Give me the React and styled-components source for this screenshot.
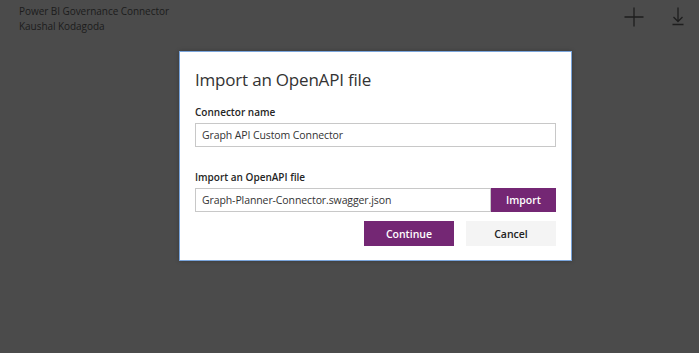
import React from "react";
import styled, { createGlobalStyle } from "styled-components";

const GlobalStyle = createGlobalStyle`
    html, body {
        margin: 0;
        padding: 0;
        background: #4b4b4b;
        font-family: "Open Sans", "Noto Sans", sans-serif;
    }
`;

const Page = styled.div`
    width: 699px;
    height: 353px;
    overflow: hidden;
    background: #4b4b4b;
`;

const TopBar = styled.div`
    display: flex;
    justify-content: space-between;
    align-items: flex-start;
    height: 51px;
    box-sizing: border-box;
    padding: 4px 11px 0 19px;
`;

const AppInfo = styled.div`
    display: flex;
    flex-direction: column;
    font-size: 10px;
    line-height: 14.5px;
    letter-spacing: -0.05px;
    color: #1c1c1c;
`;

const Actions = styled.div`
    display: flex;
    gap: 24px;
    padding-top: 3px;
`;

const IconButton = styled.div`
    width: 20px;
    height: 20px;
    display: flex;
    align-items: center;
    justify-content: center;
    color: #1e1e1e;
`;

const Dialog = styled.div`
    margin-left: 179px;
    width: 393px;
    box-sizing: border-box;
    background: #ffffff;
    border: 1px solid #7aa5dc;
    box-shadow: 0 0 4px rgba(0, 0, 0, 0.25);
    padding: 16px 15px 14px 15px;
`;

const Title = styled.h1`
    margin: 0 0 14px 0;
    font-size: 17px;
    font-weight: 400;
    line-height: 24px;
    color: #333333;
    letter-spacing: -0.2px;
`;

const Label = styled.label`
    display: block;
    font-size: 10px;
    font-weight: 600;
    line-height: 13px;
    color: #252525;
    margin-bottom: 4px;
`;

const Field = styled.div`
    margin-bottom: ${(p) => p.$gap || 0}px;
`;

const Input = styled.div`
    flex: 1;
    height: 24px;
    box-sizing: border-box;
    border: 1px solid #c8c8c8;
    padding: 0 6px;
    display: flex;
    align-items: center;
    font-size: 10.5px;
    letter-spacing: -0.1px;
    color: #333333;
    background: #fff;
`;

const InputRow = styled.div`
    display: flex;
`;

const Button = styled.button`
    height: ${(p) => p.$h || 24}px;
    width: ${(p) => p.$w}px;
    border: none;
    padding: 0;
    font-family: inherit;
    font-size: 10.5px;
    font-weight: 600;
    background: ${(p) => (p.$primary ? "#742774" : "#f4f4f4")};
    color: ${(p) => (p.$primary ? "#ffffff" : "#222222")};
`;

const Footer = styled.div`
    display: flex;
    justify-content: flex-end;
    gap: 12px;
    margin-top: 9px;
`;

export default function App() {
    return (
        <Page>
            <GlobalStyle />
            <TopBar>
                <AppInfo>
                    <span>Power BI Governance Connector</span>
                    <span>Kaushal Kodagoda</span>
                </AppInfo>
                <Actions>
                    <IconButton>
                        <svg width="20" height="20" viewBox="0 0 20 20">
                            <path d="M10 0.5v19M0.5 10h19" stroke="currentColor" strokeWidth="1.3" fill="none" />
                        </svg>
                    </IconButton>
                    <IconButton>
                        <svg width="20" height="20" viewBox="0 0 20 20">
                            <path d="M10 0.5v14M5.5 10l4.5 4.5 4.5-4.5M4.5 17.5h11" stroke="currentColor" strokeWidth="1.3" fill="none" />
                        </svg>
                    </IconButton>
                </Actions>
            </TopBar>
            <Dialog>
                <Title>Import an OpenAPI file</Title>
                <Field $gap={24}>
                    <Label>Connector name</Label>
                    <InputRow>
                        <Input>Graph API Custom Connector</Input>
                    </InputRow>
                </Field>
                <Field>
                    <Label>Import an OpenAPI file</Label>
                    <InputRow>
                        <Input>Graph-Planner-Connector.swagger.json</Input>
                        <Button $primary $w={65}>Import</Button>
                    </InputRow>
                </Field>
                <Footer>
                    <Button $primary $w={90} $h={25}>Continue</Button>
                    <Button $w={90} $h={25}>Cancel</Button>
                </Footer>
            </Dialog>
        </Page>
    );
}
